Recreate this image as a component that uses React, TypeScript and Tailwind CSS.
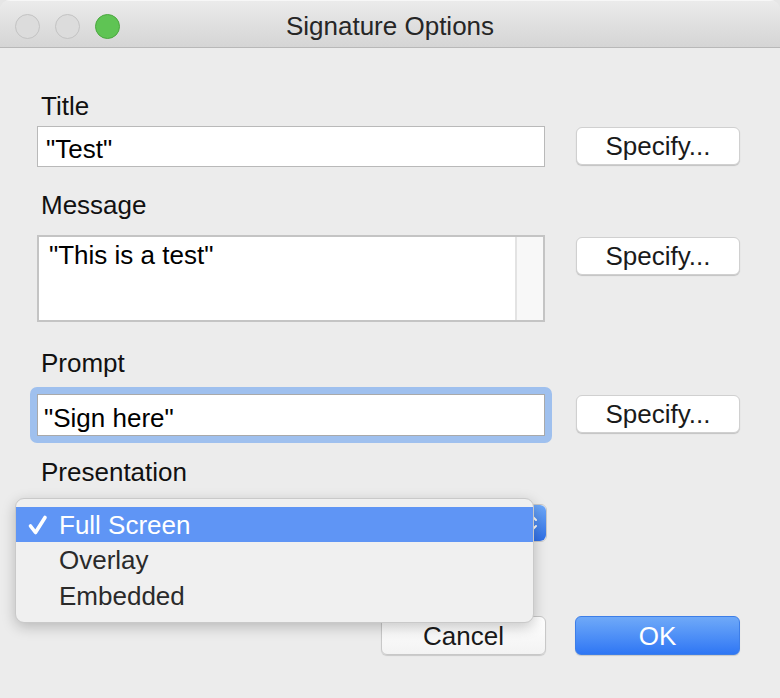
import React from "react";

const font = "font-['Liberation_Sans',Arial,sans-serif]";

const Light = ({ color }: { color: "gray" | "green" }) => (
  <div
    className={
      color === "green"
        ? "w-[25px] h-[25px] rounded-full bg-[#5fc454] border border-[#4ba73f]"
        : "w-[25px] h-[25px] rounded-full bg-[#dcdcdc] border border-[#c3c3c3]"
    }
  />
);

const SpecifyButton = ({ cls }: { cls: string }) => (
  <button
    className={`${cls} w-[164px] h-[38px] rounded-[6px] bg-white border border-[#d0d0d0] shadow-[0_1px_1px_rgba(0,0,0,0.18)] text-[26px] leading-[30px] text-[#1a1a1a]`}
  >
    Specify...
  </button>
);

const Label = ({ text, mt }: { text: string; mt: string }) => (
  <div className={`${mt} pl-1 h-[30px] text-[26px] leading-[30px] text-[#111]`}>{text}</div>
);

const Check = () => (
  <svg width="22" height="22" viewBox="0 0 22 22" className="shrink-0">
    <path d="M3.5 12 L8.5 18.5 L18 3.5" fill="none" stroke="white" strokeWidth="3.6" strokeLinecap="round" strokeLinejoin="round" />
  </svg>
);

const Chevrons = () => (
  <svg width="14" height="24" viewBox="0 0 14 24">
    <path d="M3 9 L7 5 L11 9 M3 15 L7 19 L11 15" fill="none" stroke="white" strokeWidth="2" strokeLinecap="round" strokeLinejoin="round" />
  </svg>
);

export default function App() {
  return (
    <div className={`${font} w-[780px] h-[698px] bg-[#e6e6e6] overflow-hidden`}>
      <div className="w-full h-full rounded-t-[10px] bg-[#ececec] overflow-hidden flex flex-col">
        <div className="relative h-[48px] shrink-0 bg-gradient-to-b from-[#ebebeb] to-[#d5d5d5] border-b border-[#b8b8b8] border-t border-t-[#f7f7f7] flex items-center pt-[5px]">
          <div className="flex items-center gap-[15px] pl-[15px]">
            <Light color="gray" />
            <Light color="gray" />
            <Light color="green" />
          </div>
          <div className="absolute inset-0 flex items-center justify-center text-[26px] text-[#262626] pt-[5px]">
            Signature Options
          </div>
        </div>

        <div className="flex flex-col pl-[37px]">
          <Label text="Title" mt="mt-[43px]" />
          <div className="mt-[5px] flex items-start">
            <div className="w-[508px] h-[41px] bg-white border border-[#b9b9b9] pl-[8px] pt-[7px] text-[26px] leading-[30px] text-black">
              "Test"
            </div>
            <SpecifyButton cls="mt-[1px] ml-[31px]" />
          </div>

          <Label text="Message" mt="mt-[23px]" />
          <div className="mt-[15px] flex items-start">
            <div className="w-[508px] h-[87px] bg-white border-2 border-[#c4c4c4] flex">
              <div className="flex-1 pl-[10px] pt-[3px] text-[26px] leading-[30px] text-black">"This is a test"</div>
              <div className="w-[28px] h-full bg-[#f8f8f8] border-l-2 border-[#e3e3e3]" />
            </div>
            <SpecifyButton cls="mt-[2px] ml-[31px]" />
          </div>

          <Label text="Prompt" mt="mt-[26px]" />
          <div className="mt-[9px] flex items-start">
            <div className="-ml-[7px] p-[7px] rounded-[7px] bg-[#9fc0ee]">
              <div className="w-[508px] h-[42px] bg-white border border-[#a9a9a9] pl-[6px] pt-[8px] text-[26px] leading-[30px] text-black">
                "Sign here"
              </div>
            </div>
            <SpecifyButton cls="mt-[8px] ml-[24px]" />
          </div>

          <Label text="Presentation" mt="mt-[14px]" />
          <div className="relative mt-[17px] h-[38px] w-[510px]">
            <div className="w-full h-full rounded-[6px] bg-white border border-[#c8c8c8] flex justify-end">
              <div className="w-[28px] h-full rounded-r-[6px] bg-gradient-to-b from-[#6ea8f8] to-[#2f6fe6] flex items-center justify-center">
                <Chevrons />
              </div>
            </div>
            <div className="absolute left-[-22px] top-[-6px] w-[519px] h-[125px] rounded-[9px] bg-[#f0f0f0] border border-[#c9c9c9] shadow-[0_4px_14px_rgba(0,0,0,0.22)] py-[8px] z-10">
              <div className="h-[35px] bg-[#5f95f5] flex items-center pl-[11px] gap-[10px] text-white text-[26px] leading-[30px]">
                <Check />
                <span>Full Screen</span>
              </div>
              <div className="h-[36px] flex items-center pl-[43px] text-[#2a2a2a] text-[26px] leading-[30px]">Overlay</div>
              <div className="h-[36px] flex items-center pl-[43px] text-[#2a2a2a] text-[26px] leading-[30px]">Embedded</div>
            </div>
          </div>

          <div className="mt-[74px] flex justify-end pr-[40px] gap-[29px]">
            <button className="w-[165px] h-[39px] rounded-[6px] bg-gradient-to-b from-white to-[#f3f3f3] border border-[#c8c8c8] shadow-[0_1px_1px_rgba(0,0,0,0.15)] text-[26px] leading-[30px] text-[#1a1a1a]">
              Cancel
            </button>
            <button className="w-[165px] h-[39px] rounded-[6px] bg-gradient-to-b from-[#6fa9f8] to-[#2f76f4] border border-[#3d7ee8] shadow-[0_1px_1px_rgba(0,0,0,0.15)] text-[26px] leading-[30px] text-white">
              OK
            </button>
          </div>
        </div>
      </div>
    </div>
  );
}
